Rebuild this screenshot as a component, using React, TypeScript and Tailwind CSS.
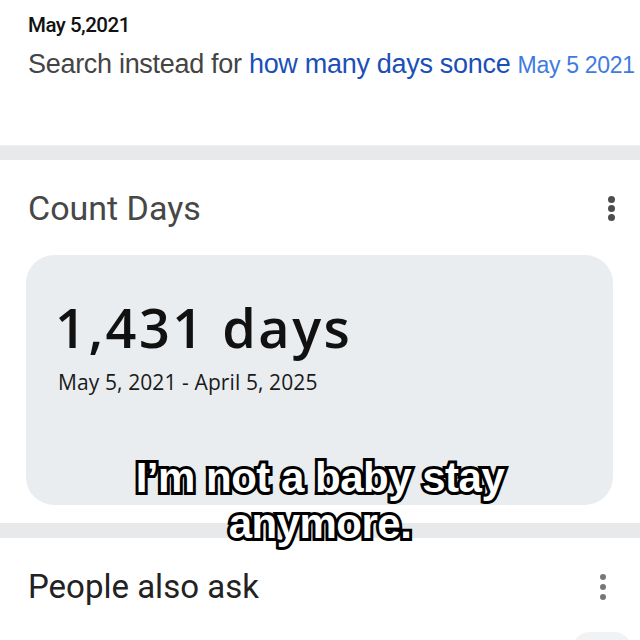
import React from "react";

function MoreDots({ size = 7, gap = 2, color = "bg-[#555]" }: { size?: number; gap?: number; color?: string }) {
  return (
    <div className="flex flex-col items-center" style={{ gap }}>
      {[0, 1, 2].map((i) => (
        <span key={i} className={`block rounded-full ${color}`} style={{ width: size, height: size }} />
      ))}
    </div>
  );
}

export default function App() {
  return (
    <div className="relative h-[640px] w-[640px] overflow-hidden bg-white">
      {/* spelling correction */}
      <header className="h-[146px] border-b border-[#efefef] px-[28px] pt-[11px]">
        <p className="font-['Roboto',sans-serif] text-[20.5px] leading-[28px] font-medium tracking-[-0.5px] text-[#111]">
          May 5,2021
        </p>
        <p className="mt-[8px] whitespace-nowrap font-['Liberation_Sans',Arial,sans-serif] text-[27px] leading-[34px] tracking-[-0.3px] text-[#444]">
          Search instead for{" "}
          <span className="text-[#1b4fb8]">how many days sonce</span>{" "}
          <span className="text-[23px] text-[#3f7be0]">May 5 2021</span>
        </p>
      </header>
      <div className="h-[14px] bg-[#e8e9eb]" />

      {/* count days card */}
      <section className="px-[26px] pt-[29px] pb-[18px]">
        <div className="flex items-center justify-between pl-[2px]">
          <h2 className="font-['Roboto',sans-serif] text-[34px] leading-[38px] text-[#474747]">Count Days</h2>
          <div className="mr-[-1px]">
            <MoreDots size={7} gap={2} color="bg-[#4d4d4d]" />
          </div>
        </div>
        <div className="mt-[28px] h-[250px] w-[587px] rounded-[28px] bg-[#e9edef] px-[29px] pt-[40px]">
          <p className="font-['Open_Sans',sans-serif] text-[54px] leading-[64px] font-semibold tracking-[2.5px] text-[#111]">
            1,431 days
          </p>
          <p className="mt-[10px] pl-[3px] font-['Open_Sans',sans-serif] text-[21px] leading-[26px] tracking-[0.1px] text-[#1a1a1a]">
            May 5, 2021 - April 5, 2025
          </p>
        </div>
      </section>
      <div className="h-[15px] bg-[#e8e9eb]" />

      {/* people also ask */}
      <section className="flex items-center justify-between pr-[34px] pl-[28px] pt-[30px]">
        <h2 className="font-['Roboto',sans-serif] text-[33px] leading-[38px] text-[#222]">People also ask</h2>
        <MoreDots size={6} gap={4} color="bg-[#777]" />
      </section>
      <div className="absolute right-[8px] bottom-[-28px] h-[36px] w-[60px] rounded-full bg-[#f1f2f3]" />

      {/* video caption overlay */}
      <div className="pointer-events-none absolute top-[455px] right-0 left-0 text-center font-['Liberation_Sans',Arial,sans-serif] text-[42px] leading-[46px] font-bold tracking-[-0.5px] text-white [paint-order:stroke_fill] [-webkit-text-stroke:6px_#000]">
        <p>I’m not a baby stay</p>
        <p>anymore.</p>
      </div>
    </div>
  );
}
